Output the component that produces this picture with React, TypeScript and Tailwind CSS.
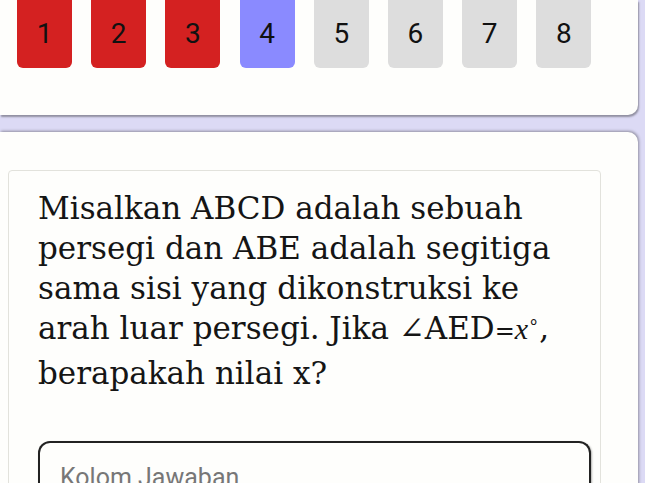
import React from "react";

const items = [
  { n: "1", c: "bg-[#d42121]" },
  { n: "2", c: "bg-[#d42121]" },
  { n: "3", c: "bg-[#d42121]" },
  { n: "4", c: "bg-[#8a8aff]" },
  { n: "5", c: "bg-[#dddddd]" },
  { n: "6", c: "bg-[#dddddd]" },
  { n: "7", c: "bg-[#dddddd]" },
  { n: "8", c: "bg-[#dddddd]" },
];

export default function App() {
  return (
    <div className="w-[645px] h-[483px] overflow-hidden bg-[#dcdaf5] flex flex-col gap-[17px]">
      <div className="h-[115px] w-[638px] shrink-0 bg-[#fefefc] rounded-br-[10px] shadow-[1px_2px_2px_rgba(0,0,0,0.35)] flex items-start px-[17px] gap-[19.2px]">
        {items.map((it) => (
          <div
            key={it.n}
            className={`${it.c} w-[55px] h-[68px] rounded-b-[6px] flex items-center justify-center text-[28px] text-[#111] font-['Roboto',sans-serif]`}
          >
            {it.n}
          </div>
        ))}
      </div>
      <div className="w-[638px] flex-1 bg-[#fefefc] rounded-tr-[10px] shadow-[1px_-1px_3px_rgba(0,0,0,0.35)] pt-[38px] pl-[8px] pr-[37px]">
        <div className="border border-[#e2e2dc] rounded-[4px] h-[400px] pl-[29px] pr-[10px] pt-[17px]">
          <p className="w-[530px] font-['DejaVu_Serif',serif] text-[31px] leading-[40px] text-[#151515]">
            Misalkan ABCD adalah sebuah persegi dan ABE adalah segitiga sama sisi yang dikonstruksi ke arah luar persegi. Jika ∠AED<span className="text-[24px]">=</span><span className="italic font-['Liberation_Serif',serif] text-[30px]">x</span><span className="relative top-[-12px] text-[18px] font-['Liberation_Serif',serif]">∘</span>, berapakah nilai x?
          </p>
          <div className="mt-[48px] w-[553px] h-[80px] border-[2.5px] border-[#222] border-b-0 rounded-t-[12px] px-[20px] pt-[20px] text-[25px] leading-[30px] text-[#777] font-['Roboto',sans-serif] shadow-[1px_1px_2px_rgba(0,0,0,0.3)]">
            Kolom Jawaban
          </div>
        </div>
      </div>
    </div>
  );
}
